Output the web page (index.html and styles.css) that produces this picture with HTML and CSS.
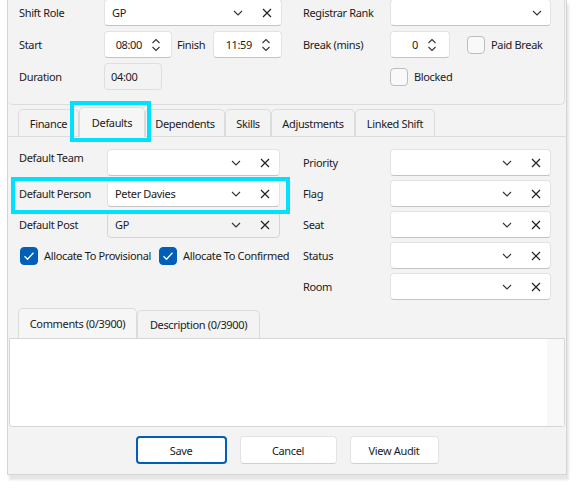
FILE: index.html
```html
<!DOCTYPE html>
<html>
<head>
<meta charset="utf-8">
<link rel="stylesheet" href="styles.css">
</head>
<body>
<div class="page">
  <div class="window">
    <div class="top">
      <div class="form-grid top-grid">
        <div class="lbl">Shift Role</div>
        <div class="combo"><span class="val">GP</span>
          <svg class="chev" width="10" height="6" viewBox="0 0 10 6"><path d="M1 1l4 4 4-4"/></svg>
          <svg class="xic" width="10" height="10" viewBox="0 0 10 10"><path d="M1 1l8 8M9 1l-8 8"/></svg>
        </div>
        <div></div>
        <div class="lbl">Registrar Rank</div>
        <div class="combo"><span class="val"></span>
          <svg class="chev chev-only" width="10" height="6" viewBox="0 0 10 6"><path d="M1 1l4 4 4-4"/></svg>
        </div>

        <div class="lbl">Start</div>
        <div class="pair">
          <div class="spin w68"><span class="val">08:00</span>
            <svg class="arrows" width="10" height="16" viewBox="0 0 10 16"><path d="M1.5 6l3.5-3.5 3.5 3.5M1.5 10l3.5 3.5 3.5-3.5"/></svg>
          </div>
          <span class="lbl finish">Finish</span>
          <div class="spin w69"><span class="val">11:59</span>
            <svg class="arrows" width="10" height="16" viewBox="0 0 10 16"><path d="M1.5 6l3.5-3.5 3.5 3.5M1.5 10l3.5 3.5 3.5-3.5"/></svg>
          </div>
        </div>
        <div></div>
        <div class="lbl">Break (mins)</div>
        <div class="pair">
          <div class="spin w60 brk"><span class="val">0</span>
            <svg class="arrows" width="10" height="16" viewBox="0 0 10 16"><path d="M1.5 6l3.5-3.5 3.5 3.5M1.5 10l3.5 3.5 3.5-3.5"/></svg>
          </div>
          <label class="check paid"><span class="box"></span><span>Paid Break</span></label>
        </div>

        <div class="lbl">Duration</div>
        <div class="pair"><div class="readonly">04:00</div></div>
        <div></div>
        <div></div>
        <div class="pair"><label class="check"><span class="box"></span><span>Blocked</span></label></div>
      </div>
    </div>

    <div class="tabs">
      <div class="tab t-fin">Finance</div>
      <div class="tab active t-def">Defaults</div>
      <div class="tab t-dep">Dependents</div>
      <div class="tab t-sk">Skills</div>
      <div class="tab t-adj">Adjustments</div>
      <div class="tab t-lnk">Linked Shift</div>
    </div>

    <div class="pane">
      <div class="form-grid pane-grid">
        <div class="lbl raised">Default Team</div>
        <div class="combo c2"><span class="val"></span>
          <svg class="chev" width="10" height="6" viewBox="0 0 10 6"><path d="M1 1l4 4 4-4"/></svg>
          <svg class="xic" width="10" height="10" viewBox="0 0 10 10"><path d="M1 1l8 8M9 1l-8 8"/></svg>
        </div>
        <div></div>
        <div class="lbl">Priority</div>
        <div class="combo"><span class="val"></span>
          <svg class="chev" width="10" height="6" viewBox="0 0 10 6"><path d="M1 1l4 4 4-4"/></svg>
          <svg class="xic" width="10" height="10" viewBox="0 0 10 10"><path d="M1 1l8 8M9 1l-8 8"/></svg>
        </div>

        <div class="lbl">Default Person</div>
        <div class="combo c2"><span class="val">Peter Davies</span>
          <svg class="chev" width="10" height="6" viewBox="0 0 10 6"><path d="M1 1l4 4 4-4"/></svg>
          <svg class="xic" width="10" height="10" viewBox="0 0 10 10"><path d="M1 1l8 8M9 1l-8 8"/></svg>
        </div>
        <div></div>
        <div class="lbl">Flag</div>
        <div class="combo"><span class="val"></span>
          <svg class="chev" width="10" height="6" viewBox="0 0 10 6"><path d="M1 1l4 4 4-4"/></svg>
          <svg class="xic" width="10" height="10" viewBox="0 0 10 10"><path d="M1 1l8 8M9 1l-8 8"/></svg>
        </div>

        <div class="lbl">Default Post</div>
        <div class="combo c2 disabled"><span class="val">GP</span>
          <svg class="chev" width="10" height="6" viewBox="0 0 10 6"><path d="M1 1l4 4 4-4"/></svg>
          <svg class="xic" width="10" height="10" viewBox="0 0 10 10"><path d="M1 1l8 8M9 1l-8 8"/></svg>
        </div>
        <div></div>
        <div class="lbl">Seat</div>
        <div class="combo"><span class="val"></span>
          <svg class="chev" width="10" height="6" viewBox="0 0 10 6"><path d="M1 1l4 4 4-4"/></svg>
          <svg class="xic" width="10" height="10" viewBox="0 0 10 10"><path d="M1 1l8 8M9 1l-8 8"/></svg>
        </div>

        <div class="checks">
          <label class="check on"><span class="box"><svg width="12" height="10" viewBox="0 0 12 10"><path d="M1.5 5.2l3 3 6-6.5"/></svg></span><span>Allocate To Provisional</span></label>
          <label class="check on"><span class="box"><svg width="12" height="10" viewBox="0 0 12 10"><path d="M1.5 5.2l3 3 6-6.5"/></svg></span><span>Allocate To Confirmed</span></label>
        </div>
        <div class="lbl">Status</div>
        <div class="combo"><span class="val"></span>
          <svg class="chev" width="10" height="6" viewBox="0 0 10 6"><path d="M1 1l4 4 4-4"/></svg>
          <svg class="xic" width="10" height="10" viewBox="0 0 10 10"><path d="M1 1l8 8M9 1l-8 8"/></svg>
        </div>

        <div></div>
        <div></div>
        <div></div>
        <div class="lbl">Room</div>
        <div class="combo"><span class="val"></span>
          <svg class="chev" width="10" height="6" viewBox="0 0 10 6"><path d="M1 1l4 4 4-4"/></svg>
          <svg class="xic" width="10" height="10" viewBox="0 0 10 10"><path d="M1 1l8 8M9 1l-8 8"/></svg>
        </div>
      </div>

      <div class="tabs sub">
        <div class="tab active t-com">Comments (0/3900)</div>
        <div class="tab t-desc">Description (0/3900)</div>
      </div>
      <div class="textarea"><div class="scroll"></div></div>

      <div class="buttons">
        <button class="btn primary">Save</button>
        <button class="btn w97">Cancel</button>
        <button class="btn w89">View Audit</button>
      </div>
    </div>
  </div>

  <div class="highlight hl-tab"></div>
  <div class="highlight hl-person"></div>
</div>
</body>
</html>
```

FILE: styles.css
```css
* { box-sizing: border-box; }
html, body { margin: 0; padding: 0; background: #ffffff; }
body {
  font-family: "Noto Sans", "Open Sans", sans-serif;
  font-size: 11px;
  letter-spacing: -0.35px;
  color: #1b1b1b;
  width: 577px;
  height: 488px;
  overflow: hidden;
}
.page { position: relative; width: 577px; height: 488px; }

.window {
  margin: -1px 0 0 7px;
  width: 560px;
  background: #f3f3f3;
  border-left: 1px solid #d4d4d4;
  border-right: 1px solid #d4d4d4;
  border-bottom: 1px solid #d4d4d4;
  box-shadow: 2px 5px 2px rgba(0,0,0,0.10);
}

.top {
  margin-right: 1px;
  border-right: 1px solid #dcdcdc;
  border-bottom: 1px solid #dcdcdc;
  border-radius: 0 0 5px 5px;
  padding: 0 0 14px 11px;
}

.form-grid {
  display: grid;
  grid-template-columns: 85px 178px 21px 87px 161px;
  grid-auto-rows: 27px;
  row-gap: 5px;
  align-items: center;
}
.pane-grid {
  grid-template-columns: 88px 173px 23px 87px 161px;
  row-gap: 4px;
  padding: 12px 0 0 11px;
}

.lbl { white-space: nowrap; }
.lbl.raised { align-self: start; margin-top: 1px; }

.combo {
  height: 27px;
  display: flex;
  align-items: center;
  background: #ffffff;
  border: 1px solid #e3e3e3;
  border-bottom-color: #c4c4c4;
  border-radius: 4px;
  padding-left: 7px;
}
.combo.disabled {
  background: #f3f3f3;
  border-color: #d5d5d5;
}
.combo .val { flex: 1; white-space: nowrap; }
.chev { fill: none; stroke: #333; stroke-width: 1.1; margin-right: 19px; }
.chev.chev-only { margin-right: 8px; }
.xic { fill: none; stroke: #222; stroke-width: 1.2; margin-right: 9px; }

.pair { display: flex; align-items: center; height: 27px; }
.spin {
  height: 27px;
  display: flex;
  align-items: center;
  justify-content: flex-end;
  background: #ffffff;
  border: 1px solid #e3e3e3;
  border-bottom-color: #c4c4c4;
  border-radius: 4px;
}
.w68 { width: 68px; }
.w69 { width: 69px; margin-left: auto; }
.w60 { width: 60px; }
.arrows { fill: none; stroke: #333; stroke-width: 1.1; margin: 0 10px 0 9px; }
.brk .arrows { margin-right: 12px; }
.finish { margin-left: 5px; }

.readonly {
  width: 58px;
  height: 27px;
  display: flex;
  align-items: center;
  padding-left: 6px;
  background: #f3f3f3;
  border: 1px solid #dedede;
  border-radius: 4px;
}

.check { display: flex; align-items: center; gap: 6px; white-space: nowrap; }
.check .box {
  width: 18px; height: 18px;
  border: 1px solid #bdbdbd;
  border-radius: 4px;
  background: #f9f9f9;
  display: flex; align-items: center; justify-content: center;
}
.check.on .box { background: #005fb8; border-color: #005fb8; }
.check.on .box svg { fill: none; stroke: #ffffff; stroke-width: 1.3; }
.paid { margin-left: 17px; }

.checks {
  grid-column: 1 / 4;
  display: flex;
  align-items: center;
  padding-left: 1px;
}
.checks .check + .check { margin-left: 8px; }

.tabs {
  display: flex;
  align-items: flex-end;
  height: 32px;
  padding-left: 10px;
  border-bottom: 1px solid #dcdcdc;
}
.tab {
  height: 27px;
  display: flex;
  align-items: center;
  justify-content: center;
  border: 1px solid #dcdcdc;
  border-bottom: none;
  border-radius: 5px 5px 0 0;
  background: #f3f3f3;
  white-space: nowrap;
}
.tab.active {
  height: 30px;
  margin-bottom: -1px;
  background: #f6f6f6;
}
.t-fin { width: 61px; }
.t-def { width: 66px; }
.t-dep { width: 80px; }
.t-sk { width: 46px; }
.t-adj { width: 84px; }
.t-lnk { width: 80px; }
.t-com { width: 119px; }
.t-desc { width: 123px; }

.tabs.sub {
  height: 30px;
  margin-top: 8px;
  border-bottom: none;
}
.tabs.sub .tab.active { height: 30px; margin-bottom: 0; }
.tabs.sub .tab { height: 28px; }

.textarea {
  height: 89px;
  margin: 0 1px 0 1px;
  background: #ffffff;
  border: 1px solid #d6d6d6;
  border-radius: 0 0 3px 3px;
  display: flex;
  justify-content: flex-end;
}
.scroll { width: 17px; background: #f8f8f8; }

.buttons {
  display: flex;
  justify-content: center;
  gap: 13px;
  padding: 9px 0 10px 0;
}
.btn {
  width: 91px;
  height: 28px;
  font: inherit;
  letter-spacing: inherit;
  color: #1b1b1b;
  background: #ffffff;
  border: 1px solid #e3e3e3;
  border-bottom-color: #cfcfcf;
  border-radius: 4px;
}
.btn.primary { border: 2px solid #005fb8; }
.btn.w97 { width: 97px; }
.btn.w89 { width: 89px; }

.highlight {
  position: absolute;
  border: 4px solid #00e0ff;
}
.hl-tab { left: 70px; top: 102px; width: 81px; height: 41px; }
.hl-person { left: 11px; top: 178px; width: 279px; height: 37px; }
```
